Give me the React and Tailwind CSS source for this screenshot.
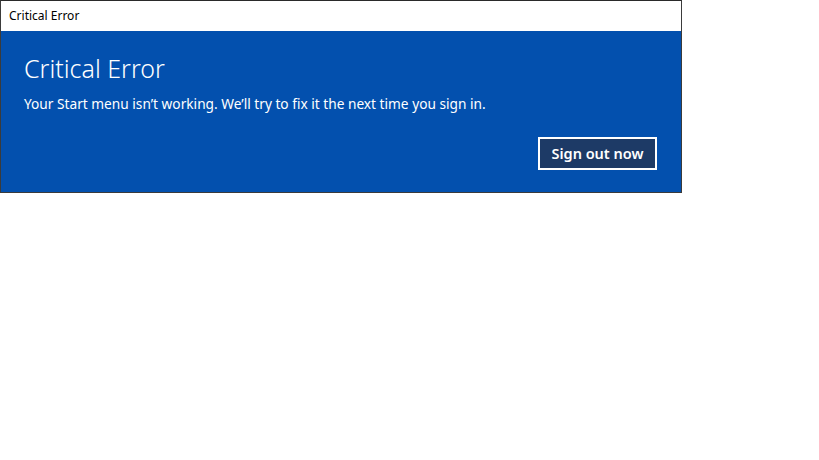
export default function App() {
  return (
    <div className="h-[460px] w-[819px] bg-white" style={{ fontFamily: '"Noto Sans", "Open Sans", sans-serif' }}>
      <div className="w-[682px] border border-[#3b3b3b] border-t-[#2a2a2a]">
        <div className="flex h-[30px] items-center bg-white pl-[8px] text-[12px] text-black">Critical Error</div>
        <div className="flex h-[161px] flex-col bg-[#0350ae] px-[23px] pt-[19px] text-white">
          <h1 className="text-[25px] font-light leading-[36px]">Critical Error</h1>
          <p className="mt-[8px] text-[13.7px] leading-[20px]">Your Start menu isn’t working. We’ll try to fix it the next time you sign in.</p>
          <div className="mt-[23px] flex justify-end pr-[1px]">
            <button className="h-[33px] w-[119px] border-2 border-white bg-[#1d3a66] text-[14.5px] font-semibold text-white">Sign out now</button>
          </div>
        </div>
      </div>
    </div>
  )
}
